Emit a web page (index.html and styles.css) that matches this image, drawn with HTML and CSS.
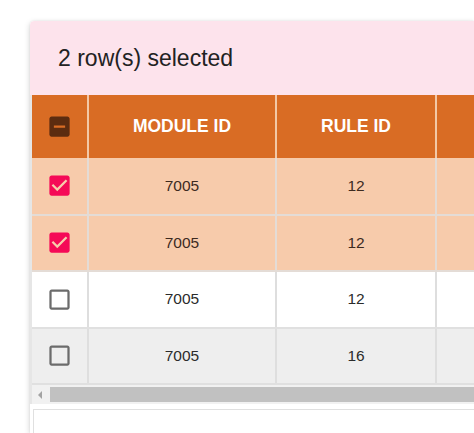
FILE: index.html
```html
<!DOCTYPE html>
<html lang="en">

<head>
  <meta charset="UTF-8">
  <meta name="viewport" content="width=device-width, initial-scale=1.0">
  <title>Rules</title>
  <link rel="stylesheet" href="styles.css">
</head>

<body>
  <div class="paper">
    <div class="toolbar">2 row(s) selected</div>

    <div class="table-wrap">
      <table class="grid">
        <thead>
          <tr>
            <th class="col-check">
              <svg class="cb cb-head" viewBox="0 0 24 24"><path d="M19 3H5c-1.1 0-2 .9-2 2v14c0 1.1.9 2 2 2h14c1.1 0 2-.9 2-2V5c0-1.1-.9-2-2-2zm-2 10H7v-2h10v2z"/></svg>
            </th>
            <th class="col-module">MODULE ID</th>
            <th class="col-rule">RULE ID</th>
            <th class="col-more"></th>
          </tr>
        </thead>
        <tbody>
          <tr class="selected">
            <td class="col-check">
              <svg class="cb cb-on" viewBox="0 0 24 24"><path d="M19 3H5c-1.11 0-2 .9-2 2v14c0 1.1.89 2 2 2h14c1.11 0 2-.9 2-2V5c0-1.1-.89-2-2-2zm-9 14l-5-5 1.41-1.41L10 14.170l7.590-7.590L19 8l-9 9z"/></svg>
            </td>
            <td>7005</td>
            <td>12</td>
            <td></td>
          </tr>
          <tr class="selected">
            <td class="col-check">
              <svg class="cb cb-on" viewBox="0 0 24 24"><path d="M19 3H5c-1.11 0-2 .9-2 2v14c0 1.1.89 2 2 2h14c1.11 0 2-.9 2-2V5c0-1.1-.89-2-2-2zm-9 14l-5-5 1.41-1.41L10 14.17l7.59-7.59L19 8l-9 9z"/></svg>
            </td>
            <td>7005</td>
            <td>12</td>
            <td></td>
          </tr>
          <tr>
            <td class="col-check">
              <svg class="cb cb-off" viewBox="0 0 24 24"><path d="M19 5v14H5V5h14m0-2H5c-1.1 0-2 .9-2 2v14c0 1.1.9 2 2 2h14c1.1 0 2-.9 2-2V5c0-1.1-.9-2-2-2z"/></svg>
            </td>
            <td>7005</td>
            <td>12</td>
            <td></td>
          </tr>
          <tr class="striped">
            <td class="col-check">
              <svg class="cb cb-off" viewBox="0 0 24 24"><path d="M19 5v14H5V5h14m0-2H5c-1.1 0-2 .9-2 2v14c0 1.1.9 2 2 2h14c1.1 0 2-.9 2-2V5c0-1.1-.9-2-2-2z"/></svg>
            </td>
            <td>7005</td>
            <td>16</td>
            <td></td>
          </tr>
        </tbody>
      </table>

      <div class="hscroll">
        <span class="hscroll-btn"></span>
        <span class="hscroll-thumb"></span>
      </div>
    </div>

    <div class="footer"></div>
  </div>
</body>

</html>
```

FILE: styles.css
```css
* {
  margin: 0;
  padding: 0;
  box-sizing: border-box;
}

html,
body {
  overflow: hidden;
}

body {
  font-family: 'Liberation Sans', Arial, sans-serif;
  background-color: #fff;
  color: #333;
  padding: 21px 0 0 30px;
  width: 474px;
  height: 433px;
}

.paper {
  width: 444px;
  height: 412px;
  overflow: hidden;
  background-color: #fff;
  border-radius: 4px 0 0 0;
  box-shadow: 0 2px 6px rgba(0, 0, 0, 0.18), 0 0 2px rgba(0, 0, 0, 0.08);
}

.toolbar {
  height: 74px;
  display: flex;
  align-items: center;
  padding-left: 28px;
  background-color: #fde3ec;
  font-size: 23px;
  color: #222;
  border-radius: 4px 0 0 0;
}

.table-wrap {
  width: 620px;
  border-left: 2px solid #e6e6e6;
}

.grid {
  border-collapse: collapse;
  table-layout: fixed;
  width: 618px;
}

.grid th,
.grid td {
  text-align: center;
  border-right: 2px solid #dedede;
}

.grid th {
  height: 63px;
  background-color: #d96c24;
  color: #fff;
  font-size: 17.5px;
  font-weight: 700;
  border-right-color: #f3c8a6;
}

.grid td {
  height: 56.5px;
  font-size: 15.5px;
  color: #2b2b2b;
  border-bottom: 2px solid #e0e0e0;
}

.col-check {
  width: 56px;
}

.col-module {
  width: 188px;
}

.col-rule {
  width: 160px;
}

.grid tr.selected td {
  background-color: #f7cbab;
  color: #3d2a1f;
  border-color: #e4dcd6;
}

.grid tr.striped td {
  background-color: #eeeeee;
}

.cb {
  display: block;
  width: 27px;
  height: 27px;
  margin: 0 auto;
}

.cb-head {
  fill: #5c2c10;
}

.cb-on {
  fill: #f50a57;
}

.cb-off {
  fill: #6b6b6b;
}

.hscroll {
  display: flex;
  height: 19px;
  padding: 2px 0;
  background-color: #f1f1f1;
}

.hscroll-btn {
  width: 18px;
  position: relative;
}

.hscroll-btn:before {
  content: "";
  position: absolute;
  left: 6px;
  top: 4px;
  border-style: solid;
  border-width: 4px 4px 4px 0;
  border-color: transparent #a3a3a3 transparent transparent;
}

.hscroll-thumb {
  flex: 1;
  background-color: #c1c1c1;
}

.footer {
  height: 30px;
  margin: 5px 0 0 3px;
  border: 1px solid #e0e0e0;
  border-right: none;
  border-bottom: none;
}
```
